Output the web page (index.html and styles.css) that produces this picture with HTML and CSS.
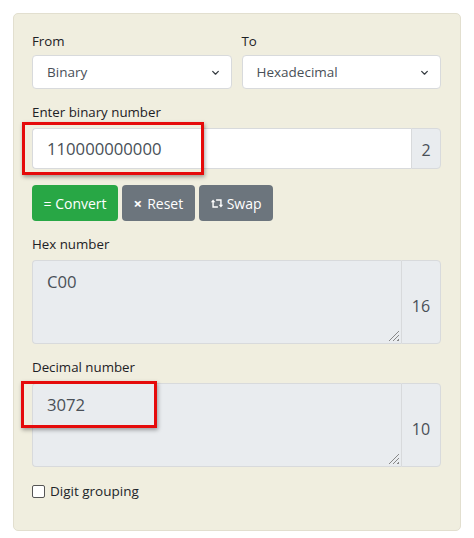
FILE: index.html
```html
<!DOCTYPE html>
<html>
<head>
<meta charset="utf-8">
<link rel="stylesheet" href="styles.css">
</head>
<body>
<div class="panel">
  <div class="row2">
    <div class="field">
      <label class="lbl">From</label>
      <div class="select"><span>Binary</span><svg class="chev" viewBox="0 0 16 16" width="9" height="9"><path d="M3 6l5 5 5-5" fill="none" stroke="#343a40" stroke-width="2.2" stroke-linecap="round" stroke-linejoin="round"/></svg></div>
    </div>
    <div class="field">
      <label class="lbl">To</label>
      <div class="select"><span>Hexadecimal</span><svg class="chev" viewBox="0 0 16 16" width="9" height="9"><path d="M3 6l5 5 5-5" fill="none" stroke="#343a40" stroke-width="2.2" stroke-linecap="round" stroke-linejoin="round"/></svg></div>
    </div>
  </div>

  <label class="lbl">Enter binary number</label>
  <div class="group hl-wrap">
    <div class="input">110000000000</div>
    <div class="addon addon-sm">2</div>
    <div class="highlight hl1"></div>
  </div>

  <div class="buttons">
    <button class="btn green">= Convert</button>
    <button class="btn gray"><span class="x">×</span> Reset</button>
    <button class="btn gray tight"><svg class="swap" viewBox="0 0 16 12" width="14" height="11"><path d="M3.5 4V10H9M7 2H12.5V8" fill="none" stroke="#fff" stroke-width="1.6"/><path d="M1 4.5L3.5 1.5L6 4.5ZM10 7.5L12.5 10.5L15 7.5Z" fill="#fff"/></svg> Swap</button>
  </div>

  <label class="lbl">Hex number</label>
  <div class="group tall">
    <div class="area">C00<span class="grip"></span></div>
    <div class="addon addon-lg">16</div>
  </div>

  <label class="lbl">Decimal number</label>
  <div class="group tall hl-wrap">
    <div class="area">3072<span class="grip"></span></div>
    <div class="addon addon-lg">10</div>
    <div class="highlight hl2"></div>
  </div>

  <div class="check"><span class="box"></span><span>Digit grouping</span></div>
</div>
</body>
</html>
```
FILE: styles.css
```css
html, body { margin: 0; padding: 0; background: #fff; }
body {
  font-family: "Open Sans", "Noto Sans", sans-serif;
  color: #212529;
  padding: 13px 0 0 13px;
}
.panel {
  width: 409px;
  height: 484px;
  padding: 16px 19px 16px 18px;
  background: #f0eedf;
  border: 1px solid #e2dfcf;
  border-radius: 5px;
  display: flex;
  flex-direction: column;
}
.row2 { display: flex; gap: 10px; }
.field { flex: 1; display: flex; flex-direction: column; }
.lbl {
  display: block;
  font-size: 13.3px;
  line-height: 22px;
  margin-bottom: 3px;
  color: #1d2125;
}
.select {
  height: 32px;
  background: #fff;
  border: 1px solid #d8dadc;
  border-radius: 4px;
  display: flex;
  align-items: center;
  justify-content: space-between;
  padding: 0 11px 0 14px;
  font-size: 13.5px;
  color: #495057;
  margin-bottom: 12px;
}
.chev { display: block; }
.group { display: flex; height: 41px; margin-top: 2px; position: relative; }
.input {
  flex: 1;
  background: #fff;
  border: 1px solid #d8dadc;
  border-right: none;
  border-radius: 4px 0 0 4px;
  font-size: 16.7px;
  color: #495057;
  display: flex;
  align-items: center;
  padding-left: 14px;
}
.addon {
  background: #e9ecef;
  border: 1px solid #d8dadc;
  border-radius: 0 4px 4px 0;
  display: flex;
  align-items: center;
  justify-content: center;
  font-size: 16px;
  color: #495057;
}
.addon-sm { width: 30px; padding-top: 3px; box-sizing: border-box; }
.addon-lg { width: 40px; padding-top: 7px; box-sizing: border-box; }
.buttons { display: flex; gap: 4px; margin: 16px 0 12px; }
.btn {
  height: 36px;
  border: none;
  border-radius: 4px;
  color: #fff;
  font-family: inherit;
  font-size: 14px;
  padding: 0 11.5px;
  display: flex;
  align-items: center;
  gap: 5px;
}
.tight { gap: 3px; padding: 0 11px; }
.green { background: #28a745; }
.gray { background: #6c757d; }
.x { font-weight: bold; font-size: 15px; }
.swap { display: block; }
.tall { height: 84px; margin-bottom: 12px; }
.area {
  flex: 1;
  background: #e9ecef;
  border: 1px solid #d8dadc;
  border-right: none;
  border-radius: 4px 0 0 4px;
  font-size: 16.7px;
  color: #495057;
  padding: 9px 14px;
  position: relative;
}
.grip {
  position: absolute;
  right: 2px;
  bottom: 2px;
  width: 10px;
  height: 10px;
  background: linear-gradient(135deg, transparent 45%, #888 45%, #888 52%, transparent 52%, transparent 65%, #888 65%, #888 72%, transparent 72%, transparent 85%, #888 85%);
}
.highlight {
  position: absolute;
  border: 3px solid #e50b0b;
  box-shadow: 1px 2px 4px rgba(0,0,0,0.35);
  pointer-events: none;
}
.hl1 { left: -10px; top: -6px; width: 176px; height: 47px; }
.hl2 { left: -11px; top: -2px; width: 130px; height: 41px; }
.check {
  display: flex;
  align-items: center;
  gap: 5px;
  font-size: 13.5px;
  margin-top: 3px;
}
.box {
  width: 11px;
  height: 11px;
  border: 1px solid #555;
  border-radius: 2px;
  background: #fff;
}
```
